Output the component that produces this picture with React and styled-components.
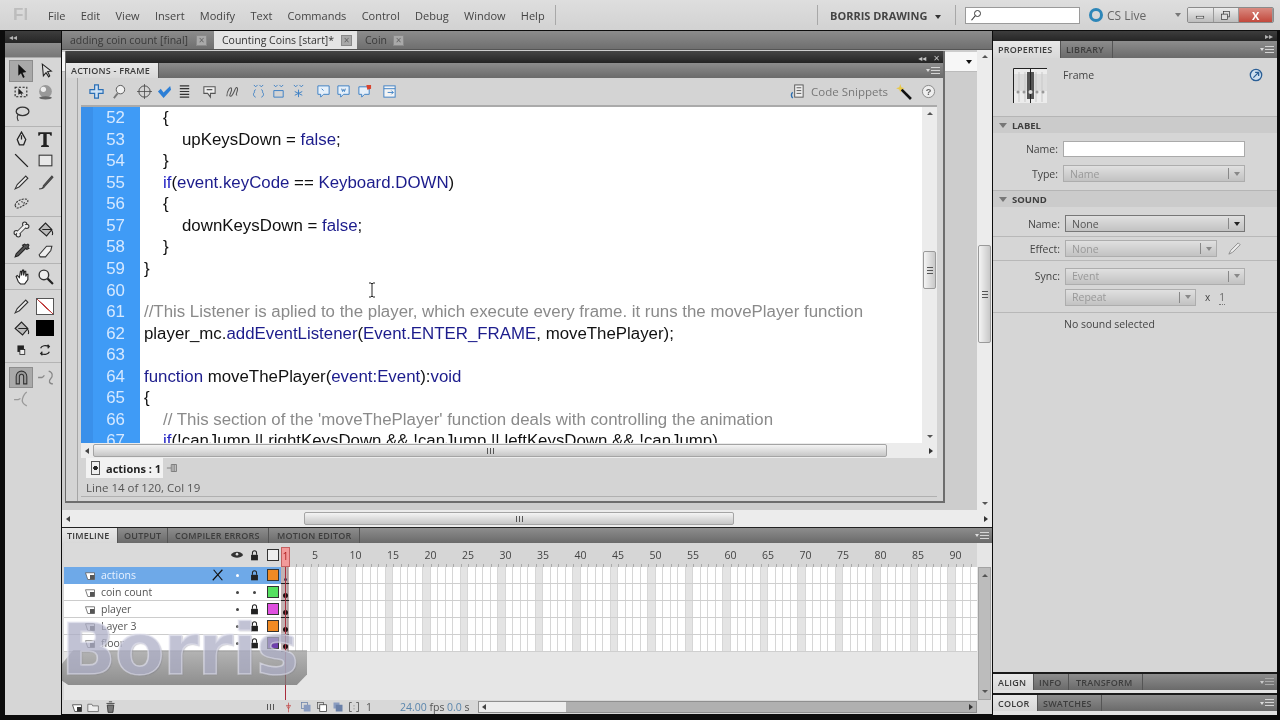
import React from 'react';
import styled, { createGlobalStyle } from 'styled-components';

const Global = createGlobalStyle`
  html, body { margin: 0; padding: 0; background: #0c0c0c; }
  * { box-sizing: border-box; }
`

const UI = `"Open Sans", "DejaVu Sans", sans-serif`

const Root = styled.div`
  width: 1280px;
  height: 720px;
  overflow: hidden;
  background: #0c0c0c;
  font-family: ${UI};
  color: #333;
  filter: blur(0.3px);
`

/* ---- menu bar ---- */
const MenuBar = styled.div`
  height: 30px;
  display: flex;
  align-items: center;
  background: linear-gradient(#dedede, #d2d2d2);
  font-size: 11px;
  color: #444;
`
const AppLogo = styled.div`
  width: 48px;
  padding-left: 13px;
  font: 700 17px "Liberation Sans", sans-serif;
  color: #bdbdbd;
`
const MenuList = styled.div`
  display: flex;
  gap: 15.3px;
  width: 507px;
`
const Sep = styled.div`
  width: 1px;
  height: ${p => p.$h || 20}px;
  margin: 0 ${p => p.$m || 0}px;
  background: #a8a8a8;
`
const Spacer = styled.div`
  flex: 1;
`
const Workspace = styled.div`
  font-weight: 700;
  font-size: 11px;
  width: 137px;
  padding-left: 12px;
  color: #444;
  white-space: nowrap;
`
const Caret = styled.span`
  display: inline-block;
  width: 0;
  height: 0;
  border: ${p => p.$s || 3.5}px solid transparent;
  border-top: ${p => p.$s ? p.$s + 1 : 4}px solid ${p => p.$c || '#333'};
  border-bottom: 0;
  margin: ${p => p.$mg || '0'};
`
const SearchBox = styled.div`
  width: 115px;
  height: 17px;
  margin: 0 8px 0 9px;
  background: #fff;
  border: 1px solid #9a9a9a;
  display: flex;
  align-items: center;
  padding-left: 4px;
`
const CsLive = styled.div`
  display: flex;
  align-items: center;
  gap: 3px;
  width: 99px;
  font-size: 12px;
  color: #666;
`
const WinGroup = styled.div`
  display: flex;
  width: 87px;
  height: 16px;
  margin: 0 6px 0 0;
  border: 1px solid #8b8b8b;
  border-radius: 2px;
  overflow: hidden;
`
const WinBtn = styled.div`
  flex: ${p => p.$w};
  display: flex;
  align-items: center;
  justify-content: center;
  border-right: 1px solid #999;
  background: ${p => p.$close ? 'linear-gradient(#d98a80, #c2483c)' : 'linear-gradient(#ececec, #bdbdbd)'};
  color: ${p => p.$close ? '#fff' : '#333'};
  font-weight: 700;
  font-size: 11px;
`

/* ---- main columns ---- */
const Columns = styled.div`
  display: flex;
  height: 684px;
  margin-top: 1px;
  padding-left: 5px;
  gap: 1px;
`

const Tools = styled.div`
  width: 56px;
  background: #d6d6d6;
  display: flex;
  flex-direction: column;
`
const CollapseBar = styled.div`
  height: ${p => p.$h || 12}px;
  background: linear-gradient(#3d3d3d, #262626);
  color: #b5b5b5;
  font-size: 8px;
  line-height: ${p => p.$h || 12}px;
  padding: 0 4px;
  text-align: ${p => p.$right ? 'right' : 'left'};
  flex-shrink: 0;
`
const ToolCap = styled.div`
  height: 15px;
  background: linear-gradient(#8f8f8f, #777);
  border-bottom: 1px solid #aaa;
`
const ToolGroup = styled.div`
  display: grid;
  grid-template-columns: 24px 24px;
  grid-auto-rows: 21.5px;
  padding: 1.5px 0 1.5px 4px;
  margin-top: ${p => p.$mt || 0}px;
  border-bottom: ${p => p.$last ? 'none' : '1px solid #b4b4b4'};
`
const ToolBtn = styled.div`
  display: flex;
  align-items: center;
  justify-content: center;
  background: ${p => p.$on ? '#a9a9a9' : 'transparent'};
  border: 1px solid ${p => p.$on ? '#8d8d8d' : 'transparent'};
`
const SwatchNone = styled.div`
  width: 18px;
  height: 17px;
  background: linear-gradient(to top right, #fff 47%, #c04040 48%, #c04040 52%, #fff 53%);
  border: 1px solid #555;
`
const SwatchFill = styled.div`
  width: 18px;
  height: 16px;
  background: #000;
`

const Center = styled.div`
  width: 930px;
  display: flex;
  flex-direction: column;
`
const DocTabs = styled.div`
  height: 19px;
  display: flex;
  background: linear-gradient(#8c8c8c, #6f6f6f);
  border-bottom: 1px solid #555;
  font-size: 10.5px;
  flex-shrink: 0;
`
const DocTab = styled.div`
  display: flex;
  align-items: center;
  gap: ${p => p.$gap || 6}px;
  width: ${p => p.$w}px;
  padding-left: 8px;
  background: ${p => p.$on ? '#e4e4e4' : 'transparent'};
  color: ${p => p.$on ? '#333' : '#3a3a3a'};
  white-space: nowrap;
`
const TabClose = styled.span`
  width: 11px;
  height: 11px;
  font-size: 10px;
  line-height: 9px;
  text-align: center;
  color: #666;
  background: #a9a9a9;
  border: 1px solid #8a8a8a;
`

const StageArea = styled.div`
  height: 477px;
  display: flex;
  flex-direction: column;
  flex-shrink: 0;
`
const StageRow = styled.div`
  flex: 1;
  display: flex;
  position: relative;
`
const Stage = styled.div`
  flex: 1;
  background: #cdcdcd;
`
const EditBar = styled.div`
  height: 20px;
  margin-top: 2px;
  background: #f7f7f7;
  display: flex;
  align-items: center;
  justify-content: flex-end;
  padding-right: 5px;
  border-bottom: 1px solid #bbb;
  width: 100%;
`
const VScroll = styled.div`
  width: ${p => p.$w || 15}px;
  background: ${p => p.$bg || '#ececec'};
  display: flex;
  flex-direction: column;
  align-items: center;
  justify-content: space-between;
  padding: 5px 0;
  position: relative;
`
const VThumb = styled.div`
  position: absolute;
  left: 1px;
  right: 1px;
  top: ${p => p.$top}px;
  height: ${p => p.$h}px;
  background: linear-gradient(90deg, #f4f4f4, #c8c8c8);
  border: 1px solid #9a9a9a;
  border-radius: 2px;
  display: flex;
  align-items: center;
  justify-content: center;
`
const Grip = styled.div`
  width: ${p => p.$h ? 7 : 6}px;
  height: ${p => p.$h ? 6 : 7}px;
  background: ${p => p.$h
    ? 'repeating-linear-gradient(90deg, #555 0 1px, transparent 1px 3px)'
    : 'repeating-linear-gradient(#555 0 1px, transparent 1px 3px)'};
`
const HScroll = styled.div`
  height: ${p => p.$h || 17}px;
  background: #ececec;
  display: flex;
  align-items: center;
  padding: 0 4px;
  gap: 4px;
  flex-shrink: 0;
`
const HTrack = styled.div`
  flex: 1;
  height: 100%;
  display: flex;
  align-items: center;
  padding-left: ${p => p.$left || 0}px;
  padding-right: ${p => p.$right || 0}px;
`
const HThumb = styled.div`
  flex: 1;
  height: ${p => p.$h || 13}px;
  background: linear-gradient(#f4f4f4, #c6c6c6);
  border: 1px solid #a4a4a4;
  border-radius: 2px;
  display: flex;
  align-items: center;
  justify-content: center;
`
const ArrowL = styled.span`
  width: 0;
  height: 0;
  border: 3px solid transparent;
  border-right: 4px solid #444;
  border-left: 0;
`
const ArrowR = styled.span`
  width: 0;
  height: 0;
  border: 3px solid transparent;
  border-left: 4px solid #333;
  border-right: 0;
`
const ArrowU = styled.span`
  width: 0;
  height: 0;
  border: 3.5px solid transparent;
  border-bottom: 3px solid #555;
  border-top: 0;
`
const ArrowD = styled.span`
  width: 0;
  height: 0;
  border: 3.5px solid transparent;
  border-top: 3px solid #555;
  border-bottom: 0;
`

/* ---- floating actions window ---- */
const ActionsWin = styled.div`
  position: absolute;
  left: 3px;
  top: 1px;
  width: 880px;
  height: 452px;
  background: #d4d4d4;
  border: 1px solid #6d6d6d;
  border-width: 0 2px 2px 1px;
  display: flex;
  flex-direction: column;
`
const WinTitle = styled.div`
  height: 12px;
  background: linear-gradient(#444, #242424);
  display: flex;
  justify-content: flex-end;
  align-items: center;
  gap: 7px;
  padding-right: 3px;
  color: #c4c4c4;
  font-size: 8px;
  font-weight: 700;
  flex-shrink: 0;
`
const TabBar = styled.div`
  height: ${p => p.$h || 15}px;
  background: linear-gradient(#8d8d8d, #6a6a6a);
  display: flex;
  flex-shrink: 0;
  align-items: stretch;
`
const PanelTab = styled.div`
  display: flex;
  align-items: center;
  padding-left: ${p => p.$pl ?? 5}px;
  width: ${p => p.$w}px;
  font-size: 9px;
  font-weight: 600;
  letter-spacing: 0.2px;
  white-space: nowrap;
  color: ${p => p.$on ? '#3a3a3a' : '#3d3d3d'};
  background: ${p => p.$on ? 'linear-gradient(#e8e8e8, #d8d8d8)' : 'transparent'};
  border-right: 1px solid #555;
`
const PanelMenu = styled.div`
  margin-left: auto;
  display: flex;
  align-items: center;
  padding-right: 3px;
  gap: 1px;
`
const PMLines = styled.div`
  width: 9px;
  height: 8px;
  background: repeating-linear-gradient(${p => p.$c || '#d5d5d5'} 0 1px, transparent 1px 3px);
`
const ActBody = styled.div`
  flex: 1;
  display: flex;
  flex-direction: column;
  margin-left: 11px;
  padding: 0 6px 0 3px;
  border-left: 1px solid #a5a5a5;
`
const ActToolbar = styled.div`
  height: 29px;
  display: flex;
  align-items: center;
  flex-shrink: 0;
  position: relative;
  border-bottom: 2px solid #aaa;
`
const ActIcon = styled.div`
  margin-left: ${p => p.$gap}px;
  display: flex;
  justify-content: center;
`
const Snippets = styled.div`
  margin-left: auto;
  display: flex;
  align-items: center;
  font-size: 11.5px;
  color: #777;
  gap: 6px;
  padding-right: 1px;
`
const CodeRow = styled.div`
  height: 336px;
  display: flex;
  flex-shrink: 0;
`
const Gutter = styled.div`
  width: 59px;
  background: linear-gradient(90deg, #3a90ea 0 12px, #3f9bf6 12px);
  color: #d6e9ff;
  font: 16.85px/21.57px "Liberation Sans", sans-serif;
  text-align: right;
  padding-right: 15px;
  overflow: hidden;
`
const CodeLines = styled.div`
  flex: 1;
  background: #fff;
  font: 16.85px/21.57px "Liberation Sans", sans-serif;
  color: #111;
  overflow: hidden;
  padding-left: 4px;
  position: relative;
  white-space: pre;
`
const Line = styled.div`
  height: 21.57px;
  padding-left: ${p => (p.$in || 0) * 19}px;
`
const Kw = styled.span`
  color: ${p => p.$c || '#1c1c8c'};
`
const Cm = styled.span`
  color: #8a8a8a;
`
const IBeam = styled.div`
  position: absolute;
  left: 224px;
  top: 175px;
`
const FileTabs = styled.div`
  height: 20px;
  display: flex;
  align-items: center;
  flex-shrink: 0;
  padding-left: 5px;
  gap: 3px;
`
const FileTab = styled.div`
  width: 77px;
  height: 20px;
  background: #f2f2f2;
  display: flex;
  align-items: center;
  gap: 6px;
  padding-left: 5px;
  font-size: 11px;
  font-weight: 700;
  color: #222;
`
const FileDoc = styled.div`
  width: 9px;
  height: 14px;
  border: 1px solid #555;
  background: radial-gradient(circle at center, #222 0 2px, #eee 2.5px);
`
const StatusLine = styled.div`
  font-size: 11.5px;
  color: #555;
  padding: 2px 0 0 5px;
  height: 19px;
  border-bottom: 1px solid #b0b0b0;
`

/* ---- timeline ---- */
const Timeline = styled.div`
  height: 187px;
  display: flex;
  flex-direction: column;
  background: #d6d6d6;
  position: relative;
  flex-shrink: 0;
  border-top: 1px solid #222;
  overflow: hidden;
`
const TimeMain = styled.div`
  height: 157px;
  display: flex;
  flex-shrink: 0;
  padding-left: 2px;
`
const LayerCol = styled.div`
  width: 217px;
  display: flex;
  flex-direction: column;
  background: #dadada;
`
const LayerHead = styled.div`
  height: 24px;
  flex-shrink: 0;
  display: flex;
  align-items: center;
  padding-left: 163px;
`
const LayerRow = styled.div`
  height: 17px;
  display: flex;
  align-items: center;
  background: ${p => p.$on ? '#6ea9e8' : '#fff'};
  color: ${p => p.$on ? '#e8f2ff' : '#555'};
  border-bottom: 1px solid ${p => p.$on ? '#6ea9e8' : '#ccc'};
  font-size: 10.5px;
  padding-left: 20px;
  svg { flex-shrink: 0; }
`
const LayerName = styled.div`
  margin-left: 5px;
  width: 108px;
  flex-shrink: 0;
`
const LayerCell = styled.div`
  width: ${p => p.$w}px;
  flex-shrink: 0;
  display: flex;
  justify-content: center;
  align-items: center;
`
const Dot = styled.div`
  width: 3px;
  height: 3px;
  border-radius: 50%;
  background: ${p => p.$c || '#444'};
`
const ColorBox = styled.div`
  width: 12px;
  height: 12px;
  border: 1px solid #333;
  background: ${p => p.$c || 'transparent'};
`
const FrameCol = styled.div`
  flex: 1;
  display: flex;
  flex-direction: column;
  min-width: 0;
`
const Ruler = styled.div`
  height: 24px;
  flex-shrink: 0;
  display: flex;
  padding: 5px 0 0 31px;
  font-size: 10.5px;
  color: #444;
  background:
    repeating-linear-gradient(90deg, #aaa 0 1px, transparent 1px 7.5px) bottom left / 100% 3px no-repeat;
`
const RulerNum = styled.div`
  width: 37.5px;
  flex-shrink: 0;
`
const FrameGrid = styled.div`
  height: 85px;
  flex-shrink: 0;
  background:
    repeating-linear-gradient(transparent 0 16px, #cfcfcf 16px 17px),
    repeating-linear-gradient(90deg, transparent 0 6.5px, #d6d6d6 6.5px 7.5px),
    repeating-linear-gradient(90deg, #fff 0 30px, #e4e4e4 30px 37.5px);
`
const FrameBlank = styled.div`
  flex: 1;
  background: #e6e6e6;
`
const TimeScroll = styled.div`
  width: 15px;
  flex-shrink: 0;
  background: #e6e6e6;
  padding-top: 24px;
  display: flex;
`
const TimeThumb = styled.div`
  width: 13px;
  margin-left: 1px;
  background: #bcbcbc;
  border: 1px solid #a3a3a3;
  display: flex;
  flex-direction: column;
  align-items: center;
  justify-content: space-between;
  padding: 6px 0;
`
const TimeBar = styled.div`
  flex: 1;
  display: flex;
  align-items: center;
  padding-left: 6px;
  font-size: 10.5px;
  color: #555;
  background: #d8d8d8;
  border-bottom: 2px solid #999;
`
const BarIcon = styled.div`
  width: ${p => p.$w || 17}px;
  flex-shrink: 0;
  display: flex;
  justify-content: ${p => p.$end ? 'flex-end' : 'center'};
  padding-right: ${p => p.$end ? 4 : 0}px;
`
const Fps = styled.span`
  color: #5b86ad;
`
const Readout = styled.div`
  width: ${p => p.$w}px;
  flex-shrink: 0;
  white-space: nowrap;
  padding-left: ${p => p.$pl || 0}px;
`
const BarTrack = styled.div`
  flex: 1;
  height: 12px;
  display: flex;
  align-items: center;
  background: linear-gradient(90deg, #ededed 0 87px, #b0b0b0 87px);
  border: 1px solid #8f8f8f;
  margin-right: 15px;
  padding: 0 3px;
  justify-content: space-between;
`
const Playhead = styled.div`
  position: absolute;
  left: 219px;
  top: 19px;
  width: 9px;
  height: 20px;
  background: #f29a9a;
  border: 1px solid #c46060;
  color: #b02020;
  font-size: 10.5px;
  line-height: 16px;
  text-align: center;
`
const PlayLine = styled.div`
  position: absolute;
  left: 223px;
  top: 39px;
  width: 1px;
  height: 133px;
  background: #a82c3c;
`
const KeyCol = styled.div`
  position: absolute;
  left: 219px;
  top: 39px;
  width: 8px;
  height: 85px;
  background: rgba(120, 85, 85, 0.45);
  display: flex;
  flex-direction: column;
`
const KeyCell = styled.div`
  height: 17px;
  border-bottom: 1px solid #222;
  display: flex;
  align-items: flex-end;
  justify-content: center;
  padding-bottom: 2px;
`
const KeyDot = styled.div`
  width: 5px;
  height: 5px;
  border-radius: 50%;
  background: #1c1010;
`
const Watermark = styled.div`
  position: absolute;
  left: -9px;
  top: 90px;
  width: 254px;
  height: 70px;
  pointer-events: none;
`
const MarkBack = styled.div`
  position: absolute;
  left: 0;
  right: 0;
  top: 32px;
  bottom: 3px;
  background: linear-gradient(rgba(140, 140, 140, 0.55), rgba(120, 120, 120, 0.8));
  clip-path: polygon(8% 0, 100% 0, 100% 70%, 96% 100%, 6% 100%, 0 70%);
`
const MarkText = styled.div`
  position: absolute;
  left: 8px;
  top: -8px;
  font: 700 72px "DejaVu Sans", sans-serif;
  letter-spacing: -1px;
  line-height: 78px;
  color: rgba(190, 192, 216, 0.62);
  -webkit-text-stroke: 1.5px rgba(232, 232, 242, 0.55);
  text-shadow: 1px 1px 1px rgba(90, 90, 110, 0.35);
  white-space: nowrap;
`

/* ---- right panel ---- */
const Side = styled.div`
  width: 284px;
  display: flex;
  flex-direction: column;
  background: #d6d6d6;
`
const SideBody = styled.div`
  flex: 1;
  font-size: 10.5px;
  color: #444;
`
const FrameHead = styled.div`
  height: 58px;
  display: flex;
  padding: 10px 14px 0 20px;
`
const FrameLabel = styled.div`
  margin-left: 16px;
  flex: 1;
  font-size: 10.5px;
`
const SectionHead = styled.div`
  height: 17px;
  display: flex;
  align-items: center;
  gap: 5px;
  padding-left: 6px;
  font-weight: 700;
  font-size: 9.5px;
  color: #3f3f3f;
  background: #cbcbcb;
  border-top: 1px solid #b5b5b5;
`
const Tri = styled.span`
  width: 0;
  height: 0;
  border: 4px solid transparent;
  border-top: 5px solid #777;
  border-bottom: 0;
`
const Row = styled.div`
  display: flex;
  align-items: center;
  height: ${p => p.$h}px;
  margin-top: ${p => p.$mt || 0}px;
  padding-bottom: ${p => p.$pb || 0}px;
  border-bottom: ${p => p.$line ? '1px solid #b8b8b8' : 'none'};
`
const RowLabel = styled.div`
  width: ${p => p.$w || 66}px;
  text-align: right;
  padding-right: 5px;
  flex-shrink: 0;
`
const TextInput = styled.div`
  width: 182px;
  height: 16px;
  background: #fff;
  border: 1px solid #aaa;
`
const Select = styled.div`
  width: ${p => p.$w}px;
  height: 17px;
  background: linear-gradient(#e0e0e0, #c2c2c2);
  border: 1px solid ${p => p.$off ? '#adadad' : '#777'};
  color: ${p => p.$off ? '#999' : '#555'};
  display: flex;
  align-items: center;
  padding-left: 6px;
  font-size: 10.5px;
  justify-content: space-between;
`
const SelectDrop = styled.div`
  width: 16px;
  height: 11px;
  border-left: 1px solid #888;
  display: flex;
  align-items: center;
  justify-content: center;
`
const Note = styled.div`
  padding: 4px 0 0 71px;
`
const Repeat = styled.div`
  margin-left: 9px;
  font-size: 10px;
  display: flex;
  gap: 9px;
`
const Under = styled.span`
  color: #666;
  border-bottom: 1px dotted #777;
`
const StackGap = styled.div`
  height: ${p => p.$h}px;
  background: ${p => p.$bg};
  flex-shrink: 0;
`

const menu = ['File', 'Edit', 'View', 'Insert', 'Modify', 'Text', 'Commands', 'Control', 'Debug', 'Window', 'Help']

const Svg = ({ s = 16, children, ...rest }) => (
  <svg width={s} height={s} viewBox="0 0 16 16" fill="none" {...rest}>{children}</svg>
)

const toolIcons = {
  arrow: <path d="M5 2l0 11 2.500-2.500 2 4.500 1.500-.8-2-4.200 3.500-.5z" fill="#111" />,
  sub: <path d="M5 2l1 11 2.500-3 2.500 4 1-1-2-4 3.500-.5z" fill="#ddd" stroke="#222" />,
  free: <><rect x="2" y="3" width="11" height="9" stroke="#222" strokeDasharray="2 1.500" /><path d="M5 4l5 5-2 0 1 3-2-3-2 1z" fill="#222" /></>,
  sphere: <><circle cx="8" cy="7" r="6" fill="#999" /><circle cx="6" cy="5" r="2.500" fill="#eee" /><ellipse cx="8" cy="13" rx="6" ry="1.500" fill="#666" /></>,
  lasso: <><ellipse cx="9" cy="6" rx="6" ry="4" stroke="#333" strokeWidth="1.200" /><path d="M5 9c-2 2-1 4 0 6" stroke="#333" /></>,
  pen: <path d="M8 1l4 7-2 5H6L4 8zM8 4v4" stroke="#222" strokeWidth="1.200" fill="#ddd" />,
  line: <path d="M2 2l12 12" stroke="#222" strokeWidth="1.300" />,
  rect: <rect x="2" y="3" width="12" height="10" stroke="#333" style={{ fill: '#e8e8e8' }} />,
  pencil: <path d="M2 14l2-4 8-8 2 2-8 8z" fill="#eee" stroke="#333" />,
  brush: <path d="M2 14c3 0 4-2 4-3l8-9 1 1-8 9c-1 2-3 2-5 2z" fill="#555" stroke="#444" />,
  deco: <path d="M2 10c0-4 6-7 11-6 2 1 1 4-2 5-3 2-6 4-8 3zM5 8l1 1M8 6l1 1M10 8l1-1" stroke="#333" strokeDasharray="2 1" />,
  bone: <><path d="M4 12L12 4" stroke="#333" strokeWidth="4" /><circle cx="3" cy="11" r="2" fill="#eee" stroke="#333" /><circle cx="5" cy="13" r="2" fill="#eee" stroke="#333" /><circle cx="11" cy="3" r="2" fill="#eee" stroke="#333" /><circle cx="13" cy="5" r="2" fill="#eee" stroke="#333" /><path d="M4 12L12 4" stroke="#eee" strokeWidth="2.500" /></>,
  bucket: <path d="M2 8l6-6 6 6-5 6zM5 8h9M14 9c1 2 1 4 0 4" fill="#bbb" stroke="#222" />,
  dropper: <path d="M2 14l1-3 7-7-1-1 2-1 1 1 2-1 1 1-1 2 1 1-2 1-1-1-7 7z" fill="#555" stroke="#222" />,
  eraser: <path d="M2 12l7-8h5l-1 4-5 6H3z" fill="#eee" stroke="#333" />,
  hand: <path d="M3 8l2 5 2 2h4l3-4V6l-1 0-1 2V3l-1 0-1 4V2H9L8 7V3H7L6 9 4 7z" fill="#fff" stroke="#222" />,
  zoom: <><circle cx="6.500" cy="6.500" r="4.500" stroke="#333" strokeWidth="1.300" fill="#eee" /><path d="M10 10l5 5" stroke="#222" strokeWidth="2" /></>,
  swap: <><rect x="3" y="3" width="8" height="8" fill="#222" /><rect x="6" y="8" width="6" height="6" fill="#eee" stroke="#222" /></>,
  swap2: <path d="M3 6c1-3 6-4 9-2M13 10c-1 3-6 4-9 2M11 2l2 2-2 2M5 10l-2 2 2 2" stroke="#222" strokeWidth="1.300" />,
  magnet: <path d="M3 14V7a5 5 0 0110 0v7h-3V7a2 2 0 00-4 0v7z" fill="#999" stroke="#333" />,
  smooth: <path d="M1 8h4M5 8l2-2M15 14c-4 0-4-3-2-5s2-6-2-7" stroke="#888" strokeWidth="1.200" />,
  straight: <path d="M1 9h4l2-1M13 15C9 13 8 11 9 8s2-5 4-6" stroke="#999" strokeWidth="1.200" />,
}

const Tool = ({ k, on, s }) => <ToolBtn $on={on}><Svg s={s || 17}>{toolIcons[k]}</Svg></ToolBtn>

const B = '#3b7fc4'
const actIcons = [
  { gap: 7.5, d: <path d="M6 1h4v5h5v4h-5v5H6v-5H1V6h5z" stroke="#2b6fb5" strokeWidth="1.300" fill="#cfe2f5" /> },
  { gap: 8, d: <><circle cx="9" cy="6" r="4.500" stroke="#555" fill="#f0f0f0" /><path d="M6 10l-4 5" stroke="#777" strokeWidth="2" /></> },
  { gap: 10, d: <><circle cx="8" cy="8" r="6" stroke="#444" /><path d="M8 0v16M0 8h16" stroke="#444" strokeWidth=".8" /></> },
  { gap: 5, d: <path d="M1 8l3-3 3 4 7-7 1 4-8 9z" fill="#2d7fd6" /> },
  { gap: 5, d: <path d="M3 2h10M3 5h10M3 8h10M3 11h10M3 14h10" stroke="#333" strokeWidth="1.300" /> },
  { gap: 10, d: <path d="M2 3h12v7H9v4l-3-4H2zM5 6h6" stroke="#555" strokeWidth="1.100" fill="#eee" /> },
  { gap: 8, d: <path d="M2 13c0-6 4-11 5-8s-4 8-1 8 5-11 7-9-3 8 0 8" stroke="#555" strokeWidth="1.100" /> },
  { gap: 11, d: <path d="M3 1l2 2 2-2M9 1l2 2 2-2M5 6c-2 0-1 4-2 4s0 4 2 4M11 6c2 0 1 4 2 4s0 4-2 4" stroke={B} /> },
  { gap: 5, d: <path d="M3 1l2 2 2-2M9 1l2 2 2-2M3 7h10v7H3z" stroke={B} /> },
  { gap: 5, d: <path d="M3 1l2 2 2-2M9 1l2 2 2-2M8 6v8M4 8l8 4M12 8l-8 4" stroke={B} /> },
  { gap: 10, d: <path d="M2 2h12v9H8l-3 3v-3H2zM6 5l2 2" stroke={B} fill="#e6f0fa" /> },
  { gap: 5, d: <path d="M2 2h12v9H8l-3 3v-3H2zM6 5l1 3 1-2 1 2 1-3" stroke={B} fill="#e6f0fa" /> },
  { gap: 6, d: <><path d="M2 3h11v8H8l-3 3v-3H2z" stroke={B} fill="#e6f0fa" /><path d="M10 1h5v4l-4 1z" fill="#d9442e" /></> },
  { gap: 10, d: <><rect x="2" y="2" width="12" height="12" stroke={B} fill="#f4f4f4" /><path d="M2 5h12M6 9h6M10 7l2 2-2 2" stroke={B} /></> },
]

const lines = [
  [1, '{'],
  [2, 'upKeysDown = ', <Kw key="a">false</Kw>, ';'],
  [1, '}'],
  [1, <Kw key="a" $c="#2424c4">if</Kw>, '(', <Kw key="b">event.keyCode</Kw>, ' == ', <Kw key="c">Keyboard.DOWN</Kw>, ')'],
  [1, '{'],
  [2, 'downKeysDown = ', <Kw key="a">false</Kw>, ';'],
  [1, '}'],
  [0, '}'],
  [0, ''],
  [0, <Cm key="a">//This Listener is aplied to the player, which execute every frame. it runs the movePlayer function</Cm>],
  [0, 'player_mc.', <Kw key="a">addEventListener</Kw>, '(', <Kw key="b">Event.ENTER_FRAME</Kw>, ', moveThePlayer);'],
  [0, ''],
  [0, <Kw key="a">function</Kw>, ' moveThePlayer(', <Kw key="b">event:Event</Kw>, '):', <Kw key="c">void</Kw>],
  [0, '{'],
  [1, <Cm key="a">// This section of the 'moveThePlayer' function deals with controlling the animation</Cm>],
  [1, <Kw key="a" $c="#2424c4">if</Kw>, '(!canJump || rightKeysDown && !canJump || leftKeysDown && !canJump)'],
]

const layers = [
  { name: 'actions', color: '#f08a24', on: true, lock: true, pen: true },
  { name: 'coin count', color: '#55e060' },
  { name: 'player', color: '#e050e0', lock: true },
  { name: 'Layer 3', color: '#f08a24', lock: true },
  { name: 'floor', color: '#7040b0', lock: true },
]

const LockIcon = () => (
  <Svg s={11}><path d="M5 7V4a3 3 0 016 0v3" stroke="#222" strokeWidth="1.500" /><rect x="3" y="7" width="10" height="8" fill="#222" /></Svg>
)
const LayerIcon = ({ c = '#555' }) => (
  <Svg s={12}><path d="M2 5h12v9H5z" fill="#fff" stroke={c} /><path d="M8 8h6v6H8z" fill={c} /></Svg>
)
const DropTri = ({ off }) => <SelectDrop><Caret $s={3} $c={off ? '#888' : '#222'} /></SelectDrop>

const FrameThumb = () => (
  <svg width="34" height="35" viewBox="0 0 34 35">
    <rect width="34" height="35" fill="#ececec" />
    <rect y="6" width="34" height="17" fill="#dcdcdc" />
    <path d="M6 4v30M12 4v30M23 4v30M29 4v30" stroke="#c8c8c8" />
    <rect x="14" y="4" width="7" height="27" fill="#555" />
    <path d="M0.500 35V0.500H34" stroke="#222" fill="none" />
    <path d="M17.500 0v35" stroke="#222" />
    <circle cx="5" cy="24" r="1.500" fill="#999" /><circle cx="11" cy="24" r="1.500" fill="#999" />
    <circle cx="17.500" cy="24" r="2" fill="#ddd" /><circle cx="24" cy="24" r="1.500" fill="#999" /><circle cx="30" cy="24" r="1.500" fill="#999" />
  </svg>
)

export default function App() {
  return (
    <Root>
      <Global />
      <MenuBar>
        <AppLogo>Fl</AppLogo>
        <MenuList>{menu.map(m => <span key={m}>{m}</span>)}</MenuList>
        <Sep />
        <Spacer />
        <Sep />
        <Workspace>BORRIS DRAWING<Caret $mg="0 0 1px 8px" /></Workspace>
        <Sep />
        <SearchBox>
          <Svg s={12}><circle cx="10" cy="6" r="4" stroke="#333" strokeWidth="1.300" /><path d="M7 9l-5 6" stroke="#333" strokeWidth="1.500" /></Svg>
        </SearchBox>
        <CsLive>
          <Svg s={16}><circle cx="8" cy="8" r="5.500" stroke="#2d86b8" strokeWidth="3" /></Svg>
          <span>CS Live</span>
          <Caret $c="#777" $mg="0 0 0 26px" />
        </CsLive>
        <WinGroup>
          <WinBtn $w={3}><Svg s={10}><rect x="2" y="10" width="12" height="3" fill="#fff" stroke="#333" /></Svg></WinBtn>
          <WinBtn $w={3}><Svg s={11}><rect x="5" y="2" width="9" height="8" stroke="#333" /><rect x="2" y="6" width="9" height="8" fill="#ddd" stroke="#333" /></Svg></WinBtn>
          <WinBtn $w={4} $close>X</WinBtn>
        </WinGroup>
      </MenuBar>

      <Columns>
        <Tools>
          <CollapseBar>◂◂</CollapseBar>
          <ToolCap />
          <ToolGroup $mt={0.5}>
            <Tool k="arrow" on /><Tool k="sub" />
            <Tool k="free" /><Tool k="sphere" />
            <Tool k="lasso" />
          </ToolGroup>
          <ToolGroup>
            <Tool k="pen" /><ToolBtn><Svg s={18}><path d="M2 2h12v3h-1l-1-1.500H9.500V13l2 1v1h-7v-1l2-1V3.500H4L3 5H2z" fill="#222" /></Svg></ToolBtn>
            <Tool k="line" /><Tool k="rect" />
            <Tool k="pencil" /><Tool k="brush" />
            <Tool k="deco" />
          </ToolGroup>
          <ToolGroup>
            <Tool k="bone" /><Tool k="bucket" />
            <Tool k="dropper" /><Tool k="eraser" />
          </ToolGroup>
          <ToolGroup>
            <Tool k="hand" /><Tool k="zoom" />
          </ToolGroup>
          <ToolGroup $mt={5}>
            <Tool k="pencil" /><ToolBtn><SwatchNone /></ToolBtn>
            <Tool k="bucket" /><ToolBtn><SwatchFill /></ToolBtn>
            <Tool k="swap" s={13} /><Tool k="swap2" s={14} />
          </ToolGroup>
          <ToolGroup $last $mt={2}>
            <Tool k="magnet" on /><Tool k="smooth" />
            <Tool k="straight" />
          </ToolGroup>
        </Tools>

        <Center>
          <DocTabs>
            <DocTab $w={152} $gap={8}>adding coin count [final]<TabClose>×</TabClose></DocTab>
            <DocTab $w={143} $on $gap={7}>Counting Coins [start]*<TabClose>×</TabClose></DocTab>
            <DocTab $w={60}>Coin<TabClose>×</TabClose></DocTab>
          </DocTabs>
          <StageArea>
            <StageRow>
              <Stage>
                <EditBar><Caret $s={3.5} $c="#111" /></EditBar>
              </Stage>
              <VScroll>
                <ArrowU /><ArrowD />
                <VThumb $top={195} $h={98}><Grip /></VThumb>
              </VScroll>
              <ActionsWin>
                <WinTitle><span>◂◂</span><span>✕</span></WinTitle>
                <TabBar>
                  <PanelTab $w={93} $on>ACTIONS - FRAME</PanelTab>
                  <PanelMenu><Caret $s={2} $c="#ddd" /><PMLines /></PanelMenu>
                </TabBar>
                <ActBody>
                  <ActToolbar>
                    {actIcons.map((a, i) => <ActIcon key={i} $gap={a.gap}><Svg s={15}>{a.d}</Svg></ActIcon>)}
                    <Snippets>
                      <Svg s={15}><rect x="5" y="1" width="9" height="13" stroke="#555" fill="#eee" /><path d="M7 4h5M7 7h5M7 10h5" stroke="#555" /><path d="M3 9c-2 1-2 4 0 6" stroke="#2d6fb0" strokeWidth="1.500" /></Svg>
                      <span>Code Snippets</span>
                      <Svg s={17} style={{ marginLeft: 1 }}><path d="M6 6l9 9" stroke="#111" strokeWidth="2.500" /><path d="M5 1l1 3 3 1-3 1-1 3-1-3-3-1 3-1z" fill="#e8c84a" /></Svg>
                      <Svg s={15} style={{ marginLeft: 3 }}><circle cx="8" cy="8" r="6.500" fill="#eee" stroke="#888" /><text x="8" y="12" textAnchor="middle" fontSize="10" fontWeight="700" fill="#666" fontFamily="Liberation Sans">?</text></Svg>
                    </Snippets>
                  </ActToolbar>
                  <CodeRow>
                    <Gutter>
                      {lines.map((_, i) => <div key={i}>{52 + i}</div>)}
                    </Gutter>
                    <CodeLines>
                      {lines.map(([ind, ...parts], i) => <Line key={i} $in={ind}>{parts}</Line>)}
                      <IBeam>
                        <Svg s={16}><path d="M5 1h2l1 1 1-1h2M8 2v12M5 15h2l1-1 1 1h2" stroke="#222" /></Svg>
                      </IBeam>
                    </CodeLines>
                    <VScroll>
                      <ArrowU /><ArrowD />
                      <VThumb $top={144} $h={38}><Grip /></VThumb>
                    </VScroll>
                  </CodeRow>
                  <HScroll $h={15}>
                    <ArrowL />
                    <HTrack $right={38}>
                      <HThumb><Grip $h /></HThumb>
                    </HTrack>
                    <ArrowR />
                  </HScroll>
                  <FileTabs>
                    <FileTab><FileDoc />actions : 1</FileTab>
                    <Svg s={14}><path d="M1 8h5M6 4h6v8H6zM8 4v8M10 4v8" stroke="#777" /></Svg>
                  </FileTabs>
                  <StatusLine>Line 14 of 120, Col 19</StatusLine>
                </ActBody>
              </ActionsWin>
            </StageRow>
            <HScroll>
              <ArrowL />
              <HTrack $left={230} $right={246}>
                <HThumb><Grip $h /></HThumb>
              </HTrack>
              <ArrowR />
            </HScroll>
          </StageArea>

          <Timeline>
            <TabBar>
              <PanelTab $w={56} $on>TIMELINE</PanelTab>
              <PanelTab $w={50} $pl={6}>OUTPUT</PanelTab>
              <PanelTab $w={101} $pl={7}>COMPILER ERRORS</PanelTab>
              <PanelTab $w={91} $pl={8}>MOTION EDITOR</PanelTab>
              <PanelMenu><Caret $s={2} $c="#ddd" /><PMLines /></PanelMenu>
            </TabBar>
            <TimeMain>
              <LayerCol>
                <LayerHead>
                  <LayerCell $w={20}><Svg s={14}><path d="M1 8c3-5 11-5 14 0-3 4-11 4-14 0z" fill="#333" /><circle cx="8" cy="7" r="1.500" fill="#ddd" /></Svg></LayerCell>
                  <LayerCell $w={14}><LockIcon /></LayerCell>
                  <LayerCell $w={24}><ColorBox $c="#eee" /></LayerCell>
                </LayerHead>
                {layers.map(l => (
                  <LayerRow key={l.name} $on={l.on}>
                    <LayerIcon />
                    <LayerName>{l.name}</LayerName>
                    <LayerCell $w={18}>
                      {l.pen && <Svg s={14}><path d="M2 14L13 2M3 2l10 12" stroke="#111" strokeWidth="1.300" /></Svg>}
                    </LayerCell>
                    <LayerCell $w={20}><Dot $c={l.on ? '#fff' : '#444'} /></LayerCell>
                    <LayerCell $w={14}>{l.lock ? <LockIcon /> : <Dot />}</LayerCell>
                    <LayerCell $w={24}><ColorBox $c={l.color} /></LayerCell>
                  </LayerRow>
                ))}
                <FrameBlank />
              </LayerCol>
              <FrameCol>
                <Ruler>
                  {[5, 10, 15, 20, 25, 30, 35, 40, 45, 50, 55, 60, 65, 70, 75, 80, 85, 90].map(n => <RulerNum key={n}>{n}</RulerNum>)}
                </Ruler>
                <FrameGrid />
                <FrameBlank />
              </FrameCol>
              <TimeScroll>
                <TimeThumb><ArrowU /><ArrowD /></TimeThumb>
              </TimeScroll>
            </TimeMain>
            <TimeBar>
              <BarIcon><LayerIcon c="#333" /></BarIcon>
              <BarIcon><Svg s={13}><path d="M1 4h5l1 2h7v7H1z" fill="#eee" stroke="#666" /></Svg></BarIcon>
              <BarIcon><Svg s={13}><path d="M4 5h8l-1 9H5zM3 3h10M6 1h4" stroke="#333" fill="#777" /></Svg></BarIcon>
              <BarIcon $w={159} $end><Grip $h /></BarIcon>
              <BarIcon $w={20}><Svg s={11}><path d="M8 1v14M5 5h6l-3 5z" stroke="#c04040" /></Svg></BarIcon>
              <BarIcon $w={16}><Svg s={12}><rect x="2" y="2" width="8" height="8" stroke="#6a80a8" /><rect x="5" y="5" width="9" height="9" fill="#8a9cc0" /></Svg></BarIcon>
              <BarIcon $w={16}><Svg s={12}><rect x="2" y="2" width="8" height="8" stroke="#555" /><rect x="5" y="5" width="9" height="9" fill="#fff" stroke="#333" /></Svg></BarIcon>
              <BarIcon $w={16}><Svg s={12}><rect x="2" y="2" width="8" height="8" fill="#8a9cc0" /><rect x="5" y="5" width="9" height="9" fill="#6a80a8" /></Svg></BarIcon>
              <BarIcon $w={15}><Svg s={12}><path d="M5 2H2v12h3M11 2h3v12h-3M8 6v1M8 10v1" stroke="#444" /></Svg></BarIcon>
              <Readout $w={39} $pl={5}>1</Readout>
              <Readout $w={47}><Fps>24.00</Fps> fps</Readout>
              <Readout $w={31}><Fps>0.0</Fps> s</Readout>
              <BarTrack><ArrowL /><ArrowR /></BarTrack>
            </TimeBar>
            <KeyCol>
              {layers.map((l, i) => <KeyCell key={l.name}>{i > 0 ? <KeyDot /> : <Dot $c="#335" />}</KeyCell>)}
            </KeyCol>
            <PlayLine />
            <Playhead>1</Playhead>
            <Watermark>
              <MarkBack />
              <MarkText>Borris</MarkText>
            </Watermark>
          </Timeline>
        </Center>

        <Side>
          <CollapseBar $h={10} $right>▸▸</CollapseBar>
          <TabBar $h={17}>
            <PanelTab $w={68} $on>PROPERTIES</PanelTab>
            <PanelTab $w={52}>LIBRARY</PanelTab>
            <PanelMenu><Caret $s={2} $c="#ddd" /><PMLines /></PanelMenu>
          </TabBar>
          <SideBody>
            <FrameHead>
              <FrameThumb />
              <FrameLabel>Frame</FrameLabel>
              <Svg s={14}><circle cx="8" cy="8" r="6.500" fill="#cfe0f0" stroke="#2b5f96" strokeWidth="1.500" /><path d="M5 11l6-6M7 5h4v4" stroke="#2b5f96" strokeWidth="1.500" /></Svg>
            </FrameHead>
            <SectionHead><Tri />LABEL</SectionHead>
            <Row $h={16} $mt={8}><RowLabel $w={70}>Name:</RowLabel><TextInput /></Row>
            <Row $h={17} $mt={8}><RowLabel $w={70}>Type:</RowLabel><Select $w={182} $off>Name<DropTri off /></Select></Row>
            <StackGap $h={8} />
            <SectionHead><Tri />SOUND</SectionHead>
            <Row $h={26} $mt={4} $line><RowLabel $w={72}>Name:</RowLabel><Select $w={180}>None<DropTri /></Select></Row>
            <Row $h={24} $line><RowLabel $w={72}>Effect:</RowLabel><Select $w={152} $off>None<DropTri off /></Select>
              <Svg s={15} style={{ marginLeft: 10 }}><path d="M2 14l2-4 8-8 2 2-8 8z" fill="#eee" stroke="#888" /></Svg>
            </Row>
            <Row $h={22} $mt={4}><RowLabel $w={72}>Sync:</RowLabel><Select $w={180} $off>Event<DropTri off /></Select></Row>
            <Row $h={26} $pb={5} $line><RowLabel $w={72} /><Select $w={131} $off>Repeat<DropTri off /></Select>
              <Repeat><span>x</span><Under>1</Under></Repeat>
            </Row>
            <Note>No sound selected</Note>
          </SideBody>
          <StackGap $h={2} $bg="#1a1a1a" />
          <TabBar $h={16}>
            <PanelTab $w={41} $on>ALIGN</PanelTab>
            <PanelTab $w={35}>INFO</PanelTab>
            <PanelTab $w={74} $pl={7}>TRANSFORM</PanelTab>
            <PanelMenu><Caret $s={2} $c="#ccc" /><PMLines $c="#aaa" /></PanelMenu>
          </TabBar>
          <StackGap $h={3} $bg="#e2e2e2" />
          <StackGap $h={2} $bg="#1a1a1a" />
          <TabBar $h={16}>
            <PanelTab $w={45} $on>COLOR</PanelTab>
            <PanelTab $w={64}>SWATCHES</PanelTab>
            <PanelMenu><Caret $s={2} $c="#ddd" /><PMLines /></PanelMenu>
          </TabBar>
          <StackGap $h={4} $bg="#e2e2e2" />
        </Side>
      </Columns>
    </Root>
  );
}
